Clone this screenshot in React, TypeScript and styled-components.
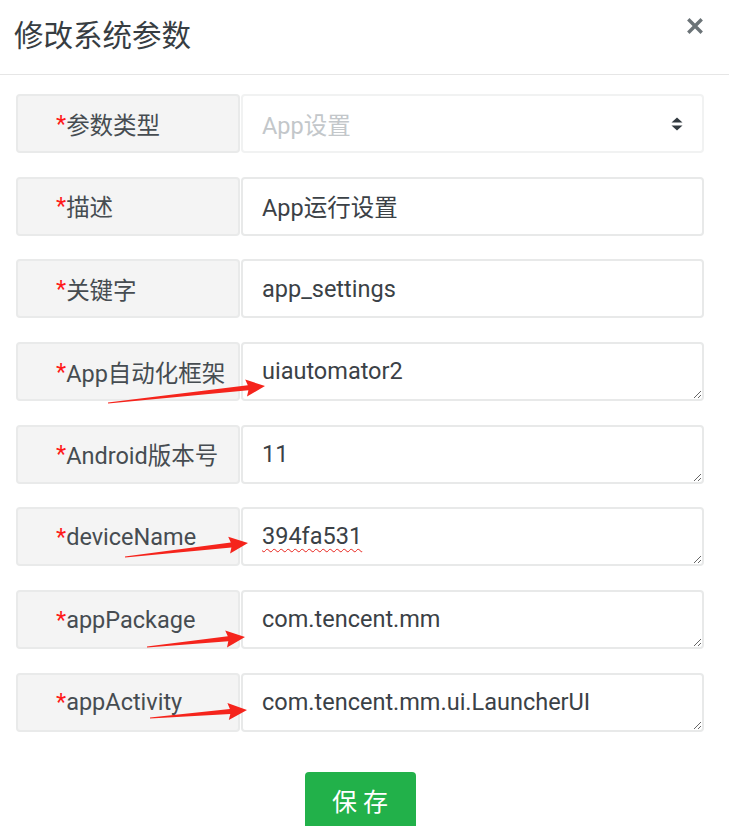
import styled, { createGlobalStyle } from 'styled-components'

const GlobalStyle = createGlobalStyle`
  html, body {
    margin: 0;
    padding: 0;
    background: #ffffff;
    font-family: Roboto, "Noto Sans CJK SC", "Noto Sans", sans-serif;
  }
`

interface IField {
  label: string
  value: string
  kind: 'select' | 'input' | 'textarea'
  squiggle?: boolean
}

const fields: IField[] = [
  { label: '参数类型', value: 'App设置', kind: 'select' },
  { label: '描述', value: 'App运行设置', kind: 'input' },
  { label: '关键字', value: 'app_settings', kind: 'input' },
  { label: 'App自动化框架', value: 'uiautomator2', kind: 'textarea' },
  { label: 'Android版本号', value: '11', kind: 'textarea' },
  { label: 'deviceName', value: '394fa531', kind: 'textarea', squiggle: true },
  { label: 'appPackage', value: 'com.tencent.mm', kind: 'textarea' },
  { label: 'appActivity', value: 'com.tencent.mm.ui.LauncherUI', kind: 'textarea' },
]

// annotation arrows: tail -> tip
const arrows = [
  [108, 403, 265, 386],
  [125, 557, 248, 543],
  [147, 647, 245, 637],
  [150, 718, 247, 710],
]

function arrowPoints(tx: number, ty: number, px: number, py: number) {
  const len = Math.hypot(px - tx, py - ty)
  const dx = (px - tx) / len
  const dy = (py - ty) / len
  const nx = -dy
  const ny = dx
  const bx = px - dx * 17
  const by = py - dy * 17
  const pts = [
    [tx + nx * 0.5, ty + ny * 0.5],
    [bx + nx * 2.5, by + ny * 2.5],
    [bx - dx * 2 + nx * 8.5, by - dy * 2 + ny * 8.5],
    [px, py],
    [bx - dx * 2 - nx * 8.5, by - dy * 2 - ny * 8.5],
    [bx - nx * 2.5, by - ny * 2.5],
    [tx - nx * 0.5, ty - ny * 0.5],
  ]
  return pts.map(p => `${p[0].toFixed(1)},${p[1].toFixed(1)}`).join(' ')
}

function App() {
  return (
    <Page>
      <GlobalStyle />
      <Header>
        <Title>修改系统参数</Title>
        <CloseBtn aria-label="close">
          <svg width="16" height="16" viewBox="0 0 16 16">
            <path d="M2.5 2.5 L13.5 13.5 M13.5 2.5 L2.5 13.5" stroke="#6b7377" strokeWidth="3.4" strokeLinecap="square" />
          </svg>
        </CloseBtn>
      </Header>
      <Form>
        {fields.map(f => (
          <Row key={f.label}>
            <Label><Star>*</Star>{f.label}</Label>
            {f.kind === 'select' && (
              <SelectBox>
                <Placeholder>{f.value}</Placeholder>
                <svg width="12" height="14" viewBox="0 0 12 14">
                  <path d="M6 0.5 L11.5 5.5 L0.5 5.5 Z M6 13.5 L11.5 8.5 L0.5 8.5 Z" fill="#333a40" />
                </svg>
              </SelectBox>
            )}
            {f.kind === 'input' && <TextInput defaultValue={f.value} spellCheck={false} />}
            {f.kind === 'textarea' && (
              <AreaWrap>
                <TextArea defaultValue={f.value} spellCheck={false} />
                {f.squiggle && <Squiggle>{f.value}</Squiggle>}
              </AreaWrap>
            )}
          </Row>
        ))}
        <Footer>
          <SaveBtn>保存</SaveBtn>
        </Footer>
      </Form>
      <Marks width="729" height="826" viewBox="0 0 729 826">
        {arrows.map((a, i) => (
          <polygon key={i} points={arrowPoints(a[0], a[1], a[2], a[3])} fill="#f5241c" />
        ))}
      </Marks>
    </Page>
  )
}

const Page = styled.div`
  position: relative;
  width: 729px;
  height: 826px;
  overflow: hidden;
  background: #fff;
`
const Header = styled.div`
  height: 75px;
  box-sizing: border-box;
  border-bottom: 1px solid #e6e6e6;
  display: flex;
  align-items: center;
  justify-content: space-between;
  padding: 0 26px 8px 14px;
`
const Title = styled.h1`
  margin: 0;
  font-size: 29.5px;
  font-weight: 400;
  color: #373d42;
`
const CloseBtn = styled.button`
  border: none;
  background: none;
  padding: 0;
  display: flex;
  cursor: pointer;
  margin-top: -14px;
`
const Form = styled.div`
  padding: 19px 25px 0 16px;
  display: flex;
  flex-direction: column;
  gap: 23.7px;
`
const Row = styled.div`
  display: flex;
  height: 59px;
`
const Label = styled.div`
  width: 224px;
  flex-shrink: 0;
  box-sizing: border-box;
  border: 2px solid #e9eaea;
  border-radius: 4px;
  background: #f4f4f4;
  display: flex;
  align-items: center;
  padding-left: 38px;
  font-size: 23.5px;
  color: #464c51;
  white-space: nowrap;
`
const Star = styled.span`
  color: #ff1a1a;
`
const SelectBox = styled.div`
  flex: 1;
  margin-left: 1px;
  box-sizing: border-box;
  border: 2px solid #f1f2f2;
  border-radius: 4px;
  display: flex;
  align-items: center;
  justify-content: space-between;
  padding: 0 19px 0 19px;
`
const Placeholder = styled.span`
  font-size: 23.5px;
  color: #c3c7ca;
`
const TextInput = styled.input`
  flex: 1;
  min-width: 0;
  margin: 0 0 0 1px;
  box-sizing: border-box;
  border: 2px solid #e8e9e9;
  border-radius: 4px;
  padding: 0 19px;
  font-family: inherit;
  font-size: 23.5px;
  color: #3b4146;
  outline: none;
`
const AreaWrap = styled.div`
  position: relative;
  flex: 1;
  display: flex;
  margin-left: 1px;
`
const TextArea = styled.textarea`
  flex: 1;
  margin: 0;
  box-sizing: border-box;
  border: 2px solid #e8e9e9;
  border-radius: 4px;
  padding: 12px 19px 0;
  line-height: 30px;
  font-family: inherit;
  font-size: 23.5px;
  color: #3b4146;
  outline: none;
  resize: vertical;
  overflow: hidden;
`
const Squiggle = styled.span`
  position: absolute;
  left: 21px;
  top: 14px;
  line-height: 30px;
  font-size: 23.5px;
  color: transparent;
  text-decoration: underline wavy #e8231c;
  text-decoration-thickness: 1.2px;
  text-underline-offset: 4px;
  pointer-events: none;
`
const Footer = styled.div`
  display: flex;
  justify-content: center;
  padding-top: 16px;
`
const SaveBtn = styled.button`
  width: 111px;
  height: 64px;
  border: none;
  border-radius: 4px;
  background: #22b14a;
  color: #fff;
  font-family: inherit;
  font-size: 25px;
  letter-spacing: 6px;
  text-indent: 6px;
  padding: 0 0 8px;
  cursor: pointer;
`
const Marks = styled.svg`
  position: absolute;
  left: 0;
  top: 0;
  pointer-events: none;
`

export default App
